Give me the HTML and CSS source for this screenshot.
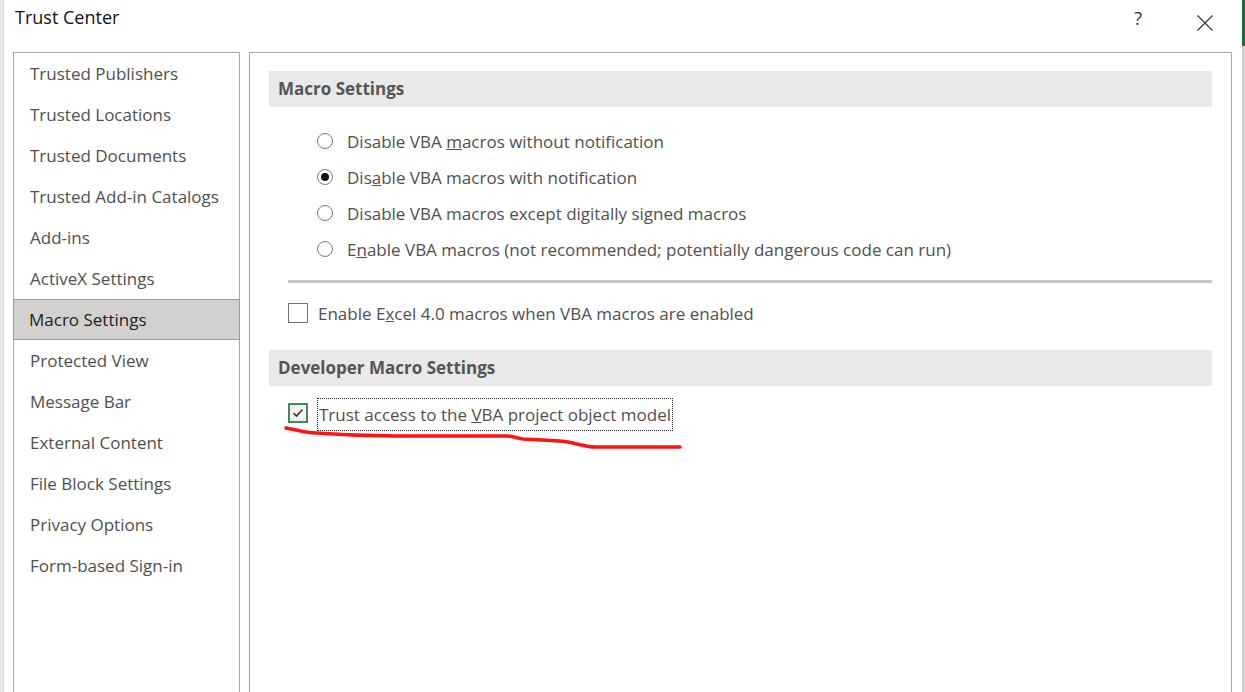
FILE: index.html
```
<html lang="en">
<head>
	<meta charset="UTF-8">
	<title>Trust Center</title>
	<link rel="stylesheet" href="styles.css">
</head>
<body>
	<div class='leftEdge'></div>
	<div class='dialog'>
		<div class='titleBar'>
			<span class='title'>Trust Center</span>
			<span class='help'>?</span>
			<span class='close'>
				<svg width="16" height="16" viewBox="0 0 16 16"><path d="M0.5 0.5 L15.5 15.5 M15.5 0.5 L0.5 15.5" stroke="#333" stroke-width="1.2" fill="none"/></svg>
			</span>
		</div>
		<div class='body'>
			<ul class='nav'>
				<li>Trusted Publishers</li>
				<li>Trusted Locations</li>
				<li>Trusted Documents</li>
				<li>Trusted Add-in Catalogs</li>
				<li>Add-ins</li>
				<li>ActiveX Settings</li>
				<li class='active'>Macro Settings</li>
				<li>Protected View</li>
				<li>Message Bar</li>
				<li>External Content</li>
				<li>File Block Settings</li>
				<li>Privacy Options</li>
				<li>Form-based Sign-in</li>
			</ul>
			<div class='panel'>
				<div class='secHead'>Macro Settings</div>
				<div class='radios'>
					<div class='opt'><span class='radio'></span><span>Disable VBA <u>m</u>acros without notification</span></div>
					<div class='opt'><span class='radio on'></span><span>Dis<u>a</u>ble VBA macros with notification</span></div>
					<div class='opt'><span class='radio'></span><span>Disable VBA macros except di<u>g</u>itally signed macros</span></div>
					<div class='opt'><span class='radio'></span><span>E<u>n</u>able VBA macros (not recommended; potentially dangerous code can run)</span></div>
				</div>
				<div class='sep'></div>
				<div class='chkRow'><span class='chk'></span><span>Enable E<u>x</u>cel 4.0 macros when VBA macros are enabled</span></div>
				<div class='secHead'>Developer Macro Settings</div>
				<div class='chkRow trust'>
					<span class='chk on'>
						<svg width="12" height="10" viewBox="0 0 12 10"><path d="M1.5 5 L4.5 8 L10.5 1.5" stroke="#333" stroke-width="1.6" fill="none"/></svg>
					</span>
					<span class='focus'>Trust access to the <u>V</u>BA project object model</span>
					<svg class='scribble' width="410" height="30" viewBox="0 0 410 30"><path d="M3 3 C15 5 22 8 33 8 C60 10 90 11 113 11 L223 11 C230 11 233 13 240 14 C255 15 270 15 285 17 C295 19 303 22 313 22 L397 22" stroke="#ff1212" stroke-width="3.5" fill="none" stroke-linecap="round" stroke-linejoin="round"/></svg>
				</div>
			</div>
		</div>
	</div>
	<div class='rightEdge'></div>
</body>
</html>
```

FILE: styles.css
```
*{
	margin: 0px;
	padding: 0px;
	list-style: none;
	box-sizing: border-box;
}

body{
	display: flex;
	height: 692px;
	overflow: hidden;
	background: #fff;
	font-family: "Open Sans", "Noto Sans", sans-serif;
	color: #444;
}

.leftEdge{
	width: 4px;
	background: #e8e8e8;
	border-right: 1px solid #d6d6d6;
}

.rightEdge{
	width: 3px;
	margin-left: 1px;
	background: linear-gradient(#1e6b41 0px, #1e6b41 46px, #cfcfcf 46px);
}

.dialog{
	flex: 1;
	display: flex;
	flex-direction: column;
	background: #fff;
}

.titleBar{
	height: 52px;
	display: flex;
	align-items: flex-start;
	padding-top: 5px;
}

.titleBar .title{
	margin-left: 11px;
	font-size: 18px;
	color: #111;
	flex: 1;
}

.titleBar .help{
	font-size: 18px;
	color: #333;
	margin-right: 55px;
	margin-top: 1px;
}

.titleBar .close{
	margin-right: 28px;
	margin-top: 10px;
}

.body{
	flex: 1;
	display: flex;
	align-items: stretch;
}

.nav{
	width: 227px;
	margin-left: 9px;
	border: 1px solid #a8a8a8;
	border-bottom: none;
	font-size: 17px;
	color: #505050;
}

.nav li{
	height: 41px;
	line-height: 41px;
	padding-left: 16px;
	white-space: nowrap;
}

.nav li.active{
	background: #d3d1cf;
	border: 1px solid #9c9c9c;
	line-height: 39px;
	padding-left: 15px;
	margin-left: -1px;
	margin-right: -1px;
	color: #222;
}

.panel{
	flex: 1;
	margin-left: 9px;
	margin-right: 9px;
	border: 1px solid #a8a8a8;
	border-bottom: none;
	padding: 18px 19px 0px 19px;
	font-size: 17px;
	color: #505050;
}

.secHead{
	height: 36px;
	line-height: 36px;
	background: #e9e9e9;
	padding-left: 9px;
	font-weight: bold;
	font-size: 17px;
	color: #555;
}

.radios{
	padding-top: 16px;
	padding-left: 48px;
}

.opt{
	height: 36px;
	display: flex;
	align-items: center;
	white-space: nowrap;
}

.radio{
	width: 16px;
	height: 16px;
	border: 1.5px solid #7a7a7a;
	border-radius: 50%;
	margin-right: 14px;
	display: flex;
	align-items: center;
	justify-content: center;
}

.radio.on::after{
	content: '';
	width: 8px;
	height: 8px;
	border-radius: 50%;
	background: #111;
}

.sep{
	height: 3px;
	background: #c6c6c6;
	margin: 13px 0px 0px 19px;
}

.chkRow{
	height: 67px;
	display: flex;
	align-items: center;
	padding-left: 19px;
	padding-bottom: 7px;
	white-space: nowrap;
}

.chk{
	width: 20px;
	height: 20px;
	border: 1.5px solid #707070;
	margin-right: 10px;
	display: flex;
	align-items: center;
	justify-content: center;
}

.chk.on{
	border: 2px solid #45885d;
	background: #f3f3f3;
	margin-right: 10px;
}

.trust{
	position: relative;
	height: 54px;
	padding-bottom: 0px;
}

.focus{
	border: 1px dotted #222;
	padding: 4px 1px 4px 1px;
	margin-left: -1px;
	margin-top: 3px;
}

.scribble{
	position: absolute;
	left: 14px;
	top: 39px;
}
```
